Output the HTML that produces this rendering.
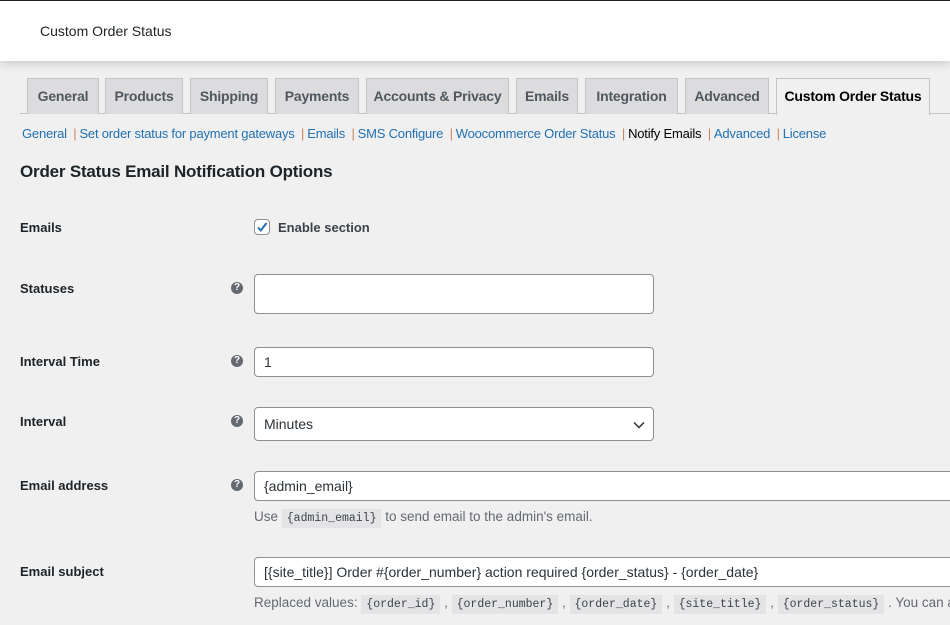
<!DOCTYPE html>
<html><head><meta charset="utf-8"><style>
*{box-sizing:border-box;margin:0;padding:0}
body{width:950px;height:625px;overflow:hidden;background:#f0f0f1;font-family:"Liberation Sans",sans-serif;color:#1d2327;position:relative;font-size:13px}
.hdr{position:absolute;left:0;top:0;width:950px;height:61px;background:#fff;border-top:1px solid #1d2327;box-shadow:0 2px 10px rgba(0,0,0,.18)}
.hdr span{position:absolute;left:40px;top:22px;font-size:14px}
.tab{position:absolute;top:78px;height:36px;background:#dcdcde;border:1px solid #c3c4c7;border-bottom:none;color:#50575e;font-size:14px;font-weight:bold;text-align:center;line-height:34px;white-space:nowrap;letter-spacing:-.2px}
.tab.a{background:#f0f0f1;color:#000;height:37px}
.line{position:absolute;left:20px;top:113px;width:930px;height:1px;background:#c3c4c7}
.sub{position:absolute;left:22px;top:126px;font-size:13px;color:#2271b1;white-space:nowrap;letter-spacing:-.2px}
.sub b{color:#000;font-weight:normal}
.sub i{font-style:normal;color:#c9845a;margin:0 3px 0 3px}
h2{position:absolute;left:20px;top:162px;font-size:17px;font-weight:bold;color:#1d2327;letter-spacing:-.2px}
.lbl{position:absolute;left:20px;font-size:13px;font-weight:bold;color:#1d2327}
.q{position:absolute;left:231px;width:12px;height:12px;border-radius:50%;background:#646970;color:#fff;font-size:10px;font-weight:bold;text-align:center;line-height:12px}
.in{position:absolute;left:254px;background:#fff;border:1px solid #8c8f94;border-radius:4px;font-size:14px;padding-left:9px;color:#2c3338;white-space:nowrap;overflow:hidden}
.desc{position:absolute;left:254px;font-size:13.5px;color:#646970;white-space:nowrap}
code{font-family:"Liberation Mono",monospace;font-size:11.5px;background:#e4e4e6;padding:3px 5px;color:#3c434a}
</style></head><body>
<div class="hdr"><span>Custom Order Status</span></div>
<div class="line"></div>
<div class="tab" style="left:27px;width:72px">General</div>
<div class="tab" style="left:105px;width:78px">Products</div>
<div class="tab" style="left:190px;width:78px">Shipping</div>
<div class="tab" style="left:275px;width:84px">Payments</div>
<div class="tab" style="left:366px;width:143px">Accounts &amp; Privacy</div>
<div class="tab" style="left:516px;width:62px">Emails</div>
<div class="tab" style="left:585px;width:93px">Integration</div>
<div class="tab" style="left:685px;width:84px">Advanced</div>
<div class="tab a" style="left:776px;width:154px">Custom Order Status</div>
<div class="sub">General <i>|</i>Set order status for payment gateways <i>|</i>Emails <i>|</i>SMS Configure <i>|</i>Woocommerce Order Status <i>|</i><b>Notify Emails</b> <i>|</i>Advanced <i>|</i>License</div>
<h2>Order Status Email Notification Options</h2>

<div class="lbl" style="top:220px">Emails</div>
<div style="position:absolute;left:254px;top:219px;width:16px;height:16px;border:1px solid #8c8f94;border-radius:4px;background:#fff">
<svg width="14" height="14" viewBox="0 0 14 14" style="position:absolute;left:0;top:0"><path d="M3 7.5l2.8 3L11.5 3" stroke="#2271b1" stroke-width="2" fill="none"/></svg></div>
<div style="position:absolute;left:278px;top:220px;font-size:13px;font-weight:bold;color:#3c434a">Enable section</div>

<div class="lbl" style="top:281px">Statuses</div>
<div class="q" style="top:282px">?</div>
<div class="in" style="top:274px;width:400px;height:40px"></div>

<div class="lbl" style="top:354px">Interval Time</div>
<div class="q" style="top:355px">?</div>
<div class="in" style="top:347px;width:400px;height:30px;line-height:28px">1</div>

<div class="lbl" style="top:414px">Interval</div>
<div class="q" style="top:415px">?</div>
<div class="in" style="top:407px;width:400px;height:34px;line-height:32px">Minutes
<svg width="12" height="8" viewBox="0 0 12 8" style="position:absolute;right:8px;top:13px"><path d="M1 1.5l5 5 5-5" stroke="#3c434a" stroke-width="1.6" fill="none"/></svg></div>

<div class="lbl" style="top:478px">Email address</div>
<div class="q" style="top:479px">?</div>
<div class="in" style="top:471px;width:700px;height:30px;line-height:28px">{admin_email}</div>
<div class="desc" style="top:509px">Use <code>{admin_email}</code> to send email to the admin's email.</div>

<div class="lbl" style="top:564px">Email subject</div>
<div class="in" style="top:557px;width:700px;height:30px;line-height:28px">[{site_title}] Order #{order_number} action required {order_status} - {order_date}</div>
<div class="desc" style="top:595px">Replaced values: <code>{order_id}</code> , <code>{order_number}</code> , <code>{order_date}</code> , <code>{site_title}</code> , <code>{order_status}</code> . You can a</div>
</body></html>
